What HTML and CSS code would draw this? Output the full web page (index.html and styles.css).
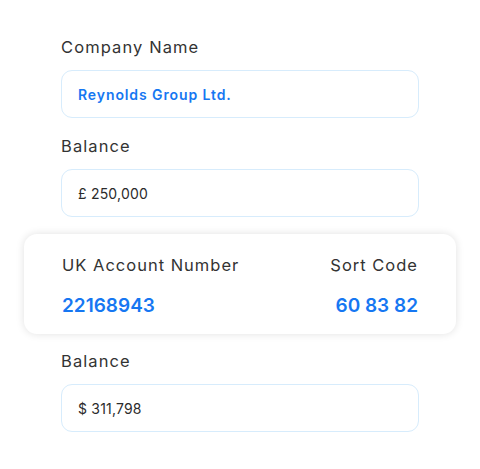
FILE: index.html
```html
<!DOCTYPE html>
<html lang="en">
<head>
    <meta charset="UTF-8">
    <meta name="viewport" content="width=device-width, initial-scale=1.0">
    <title>Account Details</title>
    <link rel="stylesheet" href="styles.css">
</head>
<body>
    <div class="container">
        <div class="field">
            <label class="label">Company Name</label>
            <div class="input input-company">Reynolds Group Ltd.</div>
        </div>

        <div class="field">
            <label class="label">Balance</label>
            <div class="input">£ 250,000</div>
        </div>

        <!-- Bank details -->
        <div class="card">
            <div class="card-col">
                <span class="card-label">UK Account Number</span>
                <span class="card-value">22168943</span>
            </div>
            <div class="card-col card-col-right">
                <span class="card-label">Sort Code</span>
                <span class="card-value">60 83 82</span>
            </div>
        </div>

        <div class="field">
            <label class="label">Balance</label>
            <div class="input">$ 311,798</div>
        </div>
    </div>
</body>
</html>
```

FILE: styles.css
```css
body {
    font-family: Inter, "Open Sans", sans-serif;
    margin: 0;
    padding: 0;
    background-color: #ffffff;
    color: #2b2b2b;
}
.container {
    width: 358px;
    margin-left: 61px;
    padding-top: 36px;
}
.field {
    display: flex;
    flex-direction: column;
}
.label {
    font-size: 16.5px;
    line-height: 22px;
    letter-spacing: 1.1px;
    color: #333333;
    margin-bottom: 12px;
}
.input {
    box-sizing: border-box;
    height: 48px;
    border: 1px solid #d7ecfc;
    border-radius: 11px;
    padding: 0 16px;
    display: flex;
    align-items: center;
    font-size: 14px;
    letter-spacing: 0.2px;
    color: #2b2b2b;
    margin-bottom: 17px;
}
.input-company {
    color: #1677f2;
    font-weight: 600;
    letter-spacing: 0.9px;
}
.card {
    box-sizing: border-box;
    width: 432px;
    margin-left: -37px;
    margin-bottom: 16px;
    padding: 20px 38px 16px;
    background-color: #ffffff;
    border-radius: 13px;
    box-shadow: 0 0 8px rgba(0, 0, 0, 0.12);
    display: flex;
    justify-content: space-between;
}
.card-col {
    display: flex;
    flex-direction: column;
}
.card-col-right {
    align-items: flex-end;
}
.card-label {
    font-size: 16.5px;
    line-height: 22px;
    letter-spacing: 1px;
    color: #333333;
    margin-bottom: 18px;
}
.card-value {
    font-size: 19px;
    line-height: 24px;
    font-weight: 600;
    color: #1677f2;
}
```
